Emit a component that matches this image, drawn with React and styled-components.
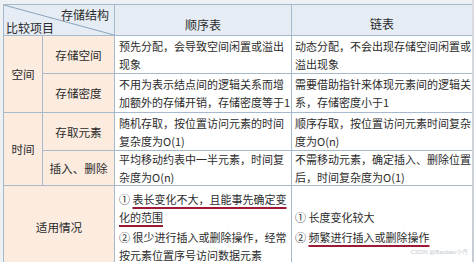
import React from "react";
import styled, { createGlobalStyle } from "styled-components";

const Global = createGlobalStyle`
  html, body { margin: 0; padding: 0; }
  body {
    width: 474px; height: 262px; overflow: hidden;
    background: #eef1f4;
    font-family: "Noto Sans CJK SC", "Noto Sans", sans-serif;
    color: #2b2b2b;
  }
`;

const Page = styled.div`
  padding: 4px 0 0 3px;
  position: relative;
`;

const EdgeShade = styled.div`
  position: absolute;
  top: 0; right: 0;
  width: 2px; height: 262px;
  background: linear-gradient(#d9dde2, #c7ccd2);
`;

const Table = styled.div`
  display: grid;
  grid-template-columns: 38px 71px 176px 180px;
  grid-template-rows: 30px 37px 38px 37px 34px 82px;
  gap: 1px;
  background: #a7b9cc;
  border: 1px solid #a7b9cc;
  width: max-content;
`;

const Cell = styled.div`
  grid-column: ${(p) => p.$col};
  grid-row: ${(p) => p.$row};
  background: ${(p) => (p.$tone === "head" ? "#e5ecf4" : p.$tone === "label" ? "#fcece0" : "#ffffff")};
  display: flex;
  align-items: center;
  justify-content: ${(p) => (p.$center ? "center" : "flex-start")};
  position: relative;
  min-width: 0;
`;

const HeadCell = styled(Cell)`
  align-items: flex-end;
  padding-bottom: ${(p) => p.$drop || 0}px;
`;

const DiagCell = styled(Cell)`
  display: block;
`;

const Diagonal = styled.svg`
  position: absolute;
  inset: 0;
  width: 100%;
  height: 100%;
`;

const CornerTop = styled.span`
  position: absolute;
  right: 5px;
  top: 1px;
  font-size: 12px;
  line-height: 18px;
`;

const CornerBottom = styled.span`
  position: absolute;
  left: 2px;
  bottom: 0;
  font-size: 12px;
  line-height: 14px;
`;

const HeadText = styled.span`
  font-size: 12px;
  line-height: 18px;
`;

const Label = styled.span`
  font-size: 11.6px;
  line-height: 18px;
  white-space: nowrap;
`;

const Body = styled.div`
  padding: 0 0 0 ${(p) => p.$pad || 4}px;
  display: flex;
  flex-direction: column;
  gap: ${(p) => p.$gap || 0}px;
  align-self: ${(p) => (p.$top ? "flex-start" : "center")};
  padding-top: ${(p) => (p.$top ? 4 : 0)}px;
`;

const Line = styled.div`
  font-size: 11px;
  line-height: 18px;
  white-space: nowrap;
`;

const Para = styled.div``;

const Marked = styled.span`
  text-decoration: underline;
  text-decoration-color: #9e1a34;
  text-decoration-thickness: 1.5px;
  text-underline-offset: 3px;
`;

const Watermark = styled.span`
  position: absolute;
  right: 4px;
  bottom: 11px;
  font-family: "Liberation Sans", sans-serif;
  font-size: 6px;
  color: #c3c9d0;
  white-space: nowrap;
`;

export default function App() {
  return (
    <>
      <Global />
      <Page>
        <Table>
          <DiagCell $col="1 / 3" $row="1" $tone="head">
            <Diagonal viewBox="0 0 100 100" preserveAspectRatio="none">
              <line x1="0" y1="0" x2="100" y2="100" stroke="#8aa2bb" strokeWidth="1" vectorEffect="non-scaling-stroke" />
            </Diagonal>
            <CornerTop>存储结构</CornerTop>
            <CornerBottom>比较项目</CornerBottom>
          </DiagCell>
          <HeadCell $col="3" $row="1" $tone="head" $center $drop={1}>
            <HeadText>顺序表</HeadText>
          </HeadCell>
          <HeadCell $col="4" $row="1" $tone="head" $center $drop={2}>
            <HeadText>链表</HeadText>
          </HeadCell>

          <Cell $col="1" $row="2 / 4" $tone="label" $center>
            <Label>空间</Label>
          </Cell>
          <Cell $col="2" $row="2" $tone="label" $center>
            <Label>存储空间</Label>
          </Cell>
          <Cell $col="3" $row="2">
            <Body>
              <Line>预先分配，会导致空间闲置或溢出</Line>
              <Line>现象</Line>
            </Body>
          </Cell>
          <Cell $col="4" $row="2">
            <Body $pad={3}>
              <Line>动态分配，不会出现存储空间闲置或</Line>
              <Line>溢出现象</Line>
            </Body>
          </Cell>

          <Cell $col="2" $row="3" $tone="label" $center>
            <Label>存储密度</Label>
          </Cell>
          <Cell $col="3" $row="3">
            <Body>
              <Line>不用为表示结点间的逻辑关系而增</Line>
              <Line>加额外的存储开销，存储密度等于1</Line>
            </Body>
          </Cell>
          <Cell $col="4" $row="3">
            <Body $pad={3}>
              <Line>需要借助指针来体现元素间的逻辑关</Line>
              <Line>系，存储密度小于1</Line>
            </Body>
          </Cell>

          <Cell $col="1" $row="4 / 6" $tone="label" $center>
            <Label>时间</Label>
          </Cell>
          <Cell $col="2" $row="4" $tone="label" $center>
            <Label>存取元素</Label>
          </Cell>
          <Cell $col="3" $row="4">
            <Body>
              <Line>随机存取，按位置访问元素的时间</Line>
              <Line>复杂度为O(1)</Line>
            </Body>
          </Cell>
          <Cell $col="4" $row="4">
            <Body $pad={3}>
              <Line>顺序存取，按位置访问元素时间复杂</Line>
              <Line>度为O(n)</Line>
            </Body>
          </Cell>

          <Cell $col="2" $row="5" $tone="label" $center>
            <Label>插入、删除</Label>
          </Cell>
          <Cell $col="3" $row="5">
            <Body>
              <Line>平均移动约表中一半元素，时间复</Line>
              <Line>杂度为O(n)</Line>
            </Body>
          </Cell>
          <Cell $col="4" $row="5">
            <Body $pad={3}>
              <Line>不需移动元素，确定插入、删除位置</Line>
              <Line>后，时间复杂度为O(1)</Line>
            </Body>
          </Cell>

          <Cell $col="1 / 3" $row="6" $tone="label" $center>
            <Label>适用情况</Label>
          </Cell>
          <Cell $col="3" $row="6">
            <Body $top $gap={2}>
              <Para>
                <Line>① <Marked>表长变化不大，且能事先确定变</Marked></Line>
                <Line><Marked>化的范围</Marked></Line>
              </Para>
              <Para>
                <Line>② 很少进行插入或删除操作，经常</Line>
                <Line>按元素位置序号访问数据元素</Line>
              </Para>
            </Body>
          </Cell>
          <Cell $col="4" $row="6">
            <Body $pad={3} $gap={2}>
              <Line>① 长度变化较大</Line>
              <Line>② <Marked>频繁进行插入或删除操作</Marked></Line>
            </Body>
            <Watermark>CSDN @Baobao小丹</Watermark>
          </Cell>
        </Table>
        <EdgeShade />
      </Page>
    </>
  );
}
